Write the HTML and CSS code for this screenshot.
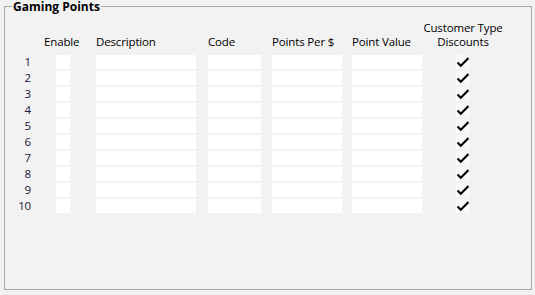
FILE: index.html
```html
<!DOCTYPE html>
<html lang="en">
<head>
    <meta charset="UTF-8">
    <meta name="viewport" content="width=device-width, initial-scale=1.0">
    <title>Gaming Points</title>
    <link rel="stylesheet" href="styles.css">
</head>
<body>

    <fieldset class="group">
        <legend>Gaming Points</legend>
        <div class="grid">
            <div class="head"></div>
            <div class="head">Enable</div>
            <div class="head">Description</div>
            <div class="head">Code</div>
            <div class="head">Points Per $</div>
            <div class="head">Point Value</div>
            <div class="head center">Customer Type<br>Discounts</div>
        </div>
    </fieldset>

    <script>
        // build the 10 rows
        const grid = document.querySelector('.grid');
        const check = '<svg width="14" height="14" viewBox="0 0 14 14"><path d="M1.5 7.5 L4.8 10.8 L12.5 3" fill="none" stroke="#000" stroke-width="2"/></svg>';
        for (let i = 1; i <= 10; i++) {
            grid.insertAdjacentHTML('beforeend',
                '<div class="num">' + i + '</div>' +
                '<div><span class="box enable"></span></div>' +
                '<div><span class="box desc"></span></div>' +
                '<div><span class="box code"></span></div>' +
                '<div><span class="box wide"></span></div>' +
                '<div><span class="box wide"></span></div>' +
                '<div class="center"><span class="tick">' + check + '</span></div>');
        }
    </script>

</body>
</html>
```

FILE: styles.css
```css
body {
    margin: 0;
    height: 295px;
    overflow: hidden;
    background-color: #f2f2f2;
    font-family: "Open Sans", "Noto Sans", sans-serif;
    font-size: 11.5px;
    letter-spacing: -0.15px;
    color: #000;
}
.group {
    box-sizing: border-box;
    margin: -1px 3px 0 4px;
    height: 291px;
    padding: 25px 0 0 0;
    border: 1px solid #a9a9a9;
}
.group legend {
    margin-left: 7px;
    padding: 0 1px;
    font-weight: bold;
    font-size: 12px;
    line-height: 15px;
    letter-spacing: 0;
}
.grid {
    display: grid;
    grid-template-columns: 39px 52px 112px 64px 80px 71px 80px;
    grid-auto-rows: 14px;
    row-gap: 2px;
}
.head {
    align-self: end;
    line-height: 14px;
    margin-bottom: 4px;
    white-space: nowrap;
}
.grid > .head:first-child {
    margin: 0;
}
.center {
    text-align: center;
}
.num {
    text-align: right;
    padding-right: 13px;
    line-height: 14px;
    color: #161640;
}
.box {
    display: block;
    height: 14px;
    background-color: #fff;
}
.enable {
    width: 14px;
    margin-left: 12px;
}
.desc {
    width: 100px;
}
.code {
    width: 53px;
}
.wide {
    width: 70px;
}
.tick {
    display: inline-block;
    width: 14px;
    height: 14px;
    background-color: #f9f9f9;
}
.tick svg {
    display: block;
}
```
